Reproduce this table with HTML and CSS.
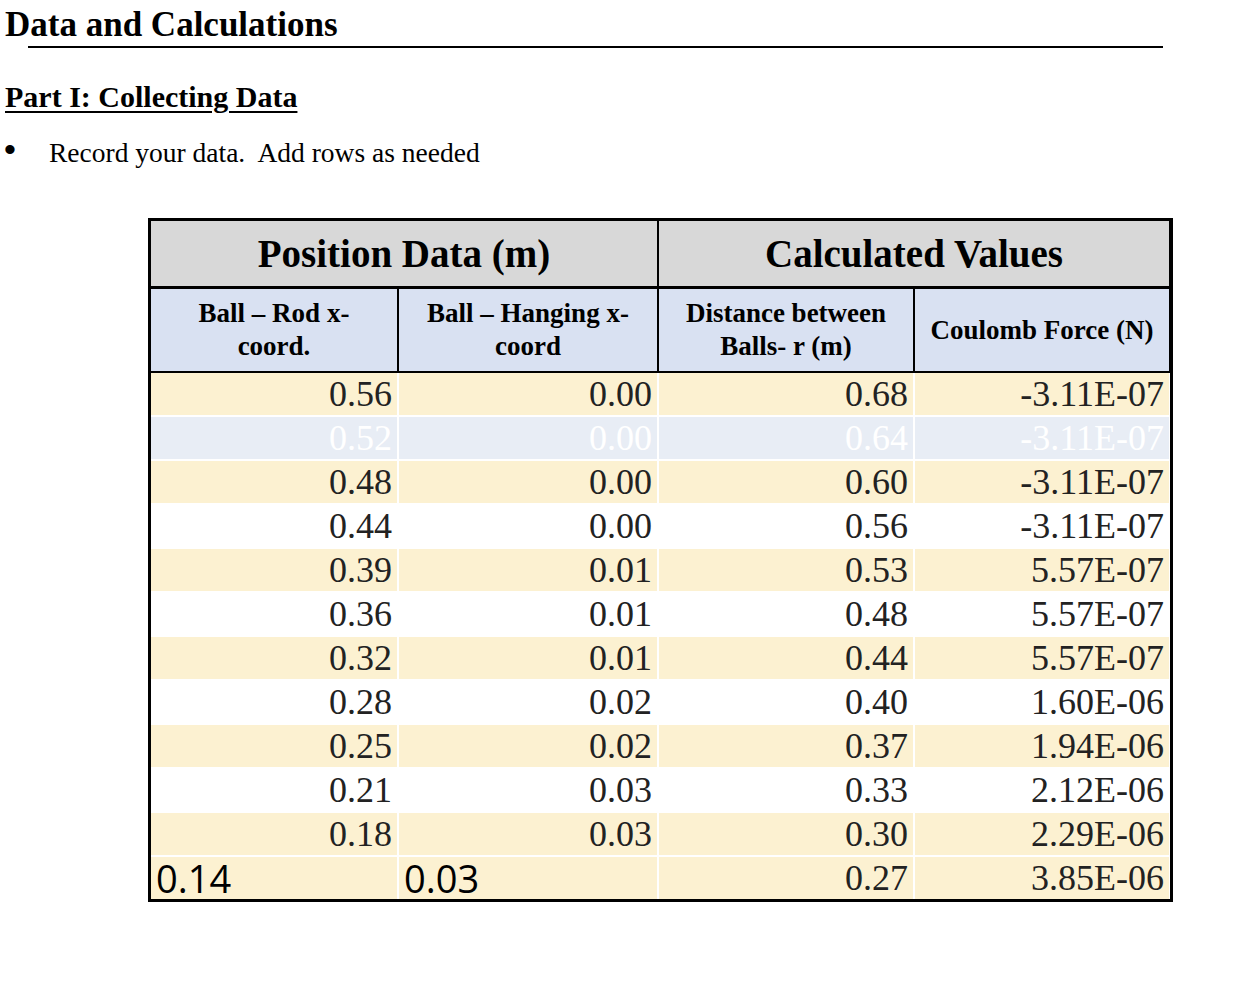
FILE: index.html
```html
<!DOCTYPE html>
<html>
<head>
<meta charset="utf-8">
<link rel="stylesheet" href="styles.css">
</head>
<body>
<h1 class="title">Data and Calculations</h1>
<div class="rule"></div>
<h2 class="part">Part I: Collecting Data</h2>
<div class="bullet-row"><span class="bullet">•</span><span class="bullet-text">Record your data.&nbsp; Add rows as needed</span></div>

<div class="table">
  <div class="head">
    <div class="h1 span2">Position Data (m)</div>
    <div class="h1 span2">Calculated Values</div>
    <div class="h2">Ball – Rod x-<br>coord.</div>
    <div class="h2">Ball – Hanging x-<br>coord</div>
    <div class="h2">Distance between<br>Balls- r (m)</div>
    <div class="h2">Coulomb Force (N)</div>
  </div>
  <div class="body">
    <div class="c y">0.56</div><div class="c y">0.00</div><div class="c y">0.68</div><div class="c y">-3.11E-07</div>
    <div class="c g">0.52</div><div class="c g">0.00</div><div class="c g">0.64</div><div class="c g">-3.11E-07</div>
    <div class="c y">0.48</div><div class="c y">0.00</div><div class="c y">0.60</div><div class="c y">-3.11E-07</div>
    <div class="c w">0.44</div><div class="c w">0.00</div><div class="c w">0.56</div><div class="c w">-3.11E-07</div>
    <div class="c y">0.39</div><div class="c y">0.01</div><div class="c y">0.53</div><div class="c y">5.57E-07</div>
    <div class="c w">0.36</div><div class="c w">0.01</div><div class="c w">0.48</div><div class="c w">5.57E-07</div>
    <div class="c y">0.32</div><div class="c y">0.01</div><div class="c y">0.44</div><div class="c y">5.57E-07</div>
    <div class="c w">0.28</div><div class="c w">0.02</div><div class="c w">0.40</div><div class="c w">1.60E-06</div>
    <div class="c y">0.25</div><div class="c y">0.02</div><div class="c y">0.37</div><div class="c y">1.94E-06</div>
    <div class="c w">0.21</div><div class="c w">0.03</div><div class="c w">0.33</div><div class="c w">2.12E-06</div>
    <div class="c y">0.18</div><div class="c y">0.03</div><div class="c y">0.30</div><div class="c y">2.29E-06</div>
    <div class="c y sans">0.14</div><div class="c y sans">0.03</div><div class="c y">0.27</div><div class="c y">3.85E-06</div>
  </div>
</div>
</body>
</html>
```

FILE: styles.css
```css
html, body {
  margin: 0;
  padding: 0;
  background: #ffffff;
}
body {
  font-family: "Liberation Serif", "Times New Roman", serif;
  color: #000;
}
.title {
  margin: 5px 0 0 0;
  padding-left: 5px;
  font-size: 35px;
  line-height: 40px;
  font-weight: bold;
}
.rule {
  margin: 1px 0 0 28px;
  width: 1135px;
  border-top: 2px solid #000;
}
.part {
  margin: 32px 0 0 0;
  padding-left: 5px;
  font-size: 30px;
  line-height: 34px;
  font-weight: bold;
  text-decoration: underline;
  text-decoration-thickness: 2px;
  text-underline-offset: 4px;
}
.bullet-row {
  margin-top: 23px;
  display: flex;
  align-items: flex-start;
  height: 32px;
  font-size: 27.5px;
  line-height: 32px;
}
.bullet {
  width: 49px;
  padding-left: 4px;
  box-sizing: border-box;
  font-family: "Liberation Sans", "DejaVu Sans", sans-serif;
  font-size: 34px;
  line-height: 32px;
  height: 32px;
  position: relative;
  top: -4px;
}
.table {
  margin: 49px 0 0 148px;
  width: 1025px;
  box-sizing: border-box;
  border: 3px solid #000;
}
.head {
  display: grid;
  grid-template-columns: 246px 258px 254px 254px;
  grid-template-rows: 65px 82px;
  column-gap: 2px;
  row-gap: 3px;
  background: #000;
  border-bottom: 2px solid #000;
}
.span2 {
  grid-column: span 2;
}
.h1 {
  background: #d8d8d8;
  font-size: 39px;
  font-weight: bold;
  display: flex;
  align-items: center;
  justify-content: center;
  padding-bottom: 1px;
}
.h2 {
  background: #d9e1f2;
  font-size: 27px;
  font-weight: bold;
  line-height: 33px;
  display: flex;
  align-items: center;
  justify-content: center;
  text-align: center;
}
.body {
  display: grid;
  grid-template-columns: 246px 258px 254px 254px;
  grid-auto-rows: 42px;
  gap: 2px;
  background: #fff;
}
.c {
  font-size: 36px;
  line-height: 42px;
  text-align: right;
  padding-right: 5px;
  color: #222;
}
.y {
  background: #fcf1d1;
}
.w {
  background: #fff;
}
.g {
  background: #e8edf5;
  color: #fff;
}
.sans {
  font-family: "Open Sans", "Liberation Sans", sans-serif;
  font-size: 38px;
  text-align: left;
  padding-left: 5px;
  color: #000;
}
```
